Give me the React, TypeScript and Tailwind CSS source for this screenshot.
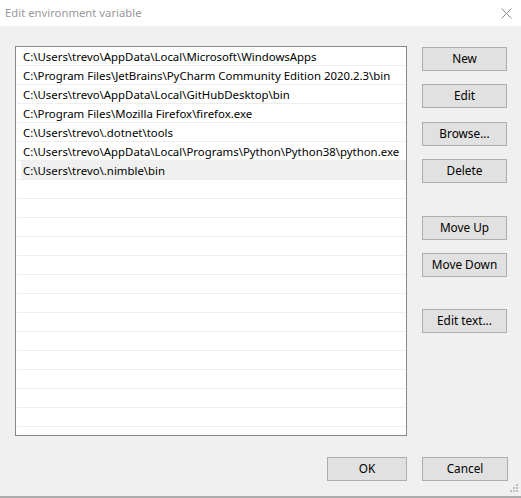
import React from "react";

const paths = [
  "C:\\Users\\trevo\\AppData\\Local\\Microsoft\\WindowsApps",
  "C:\\Program Files\\JetBrains\\PyCharm Community Edition 2020.2.3\\bin",
  "C:\\Users\\trevo\\AppData\\Local\\GitHubDesktop\\bin",
  "C:\\Program Files\\Mozilla Firefox\\firefox.exe",
  "C:\\Users\\trevo\\.dotnet\\tools",
  "C:\\Users\\trevo\\AppData\\Local\\Programs\\Python\\Python38\\python.exe",
  "C:\\Users\\trevo\\.nimble\\bin",
];

const TOTAL_ROWS = 21;
const SELECTED = 6;

function Button({ label, className = "" }: { label: string; className?: string }) {
  return (
    <button
      className={`h-[24px] border border-[#adadad] bg-[#e1e1e1] text-[11.8px] leading-none text-black ${className}`}
    >
      {label}
    </button>
  );
}

function PathList() {
  const rows = Array.from({ length: TOTAL_ROWS }, (_, i) => paths[i] ?? "");
  return (
    <div className="h-[390px] w-[392px] overflow-hidden border border-[#828790] bg-white">
      {rows.map((p, i) => (
        <div key={i} className="relative h-[19px]">
          {i === SELECTED && (
            <div className="absolute inset-y-0 left-[5px] right-0 bg-[#f0f0f0]" />
          )}
          <div className="relative pl-[7px] text-[11.4px] leading-[19px] whitespace-nowrap text-black">
            {p}
          </div>
          <div className="absolute bottom-0 left-[1px] right-0 h-px bg-[#efefef]" />
        </div>
      ))}
    </div>
  );
}

export default function App() {
  return (
    <div
      className="relative h-[498px] w-[521px] overflow-hidden bg-[#f0f0f0]"
      style={{ fontFamily: '"Noto Sans", "Open Sans", sans-serif' }}
    >
      {/* title bar */}
      <div className="flex h-[26px] items-center justify-between bg-white pl-[5px] pr-[9px]">
        <span className="text-[11.3px] text-[#999999]">Edit environment variable</span>
        <svg width="11" height="11" viewBox="0 0 11 11">
          <path d="M0.5 0.5 L10.5 10.5 M10.5 0.5 L0.5 10.5" stroke="#8a8a8a" strokeWidth="1" />
        </svg>
      </div>

      {/* list and side buttons */}
      <div className="flex pl-[15px] pt-[20px]">
        <PathList />
        <div className="ml-[15px] flex w-[85px] flex-col pt-[1px]">
          <Button label="New" />
          <Button label="Edit" className="mt-[13px]" />
          <Button label="Browse..." className="mt-[14px]" />
          <Button label="Delete" className="mt-[13px]" />
          <Button label="Move Up" className="mt-[33px]" />
          <Button label="Move Down" className="mt-[13px]" />
          <Button label="Edit text..." className="mt-[32px]" />
        </div>
      </div>

      {/* dialog buttons */}
      <div className="mt-[21px] flex justify-end pr-[13px]">
        <Button label="OK" className="w-[80px]" />
        <Button label="Cancel" className="ml-[15px] w-[86px]" />
      </div>

      {/* size grip */}
      <svg className="absolute bottom-[5px] right-[2px]" width="9" height="9" viewBox="0 0 9 9">
        <rect x="6" y="0" width="2" height="2" fill="#bcbcbc" />
        <rect x="3" y="3" width="2" height="2" fill="#bcbcbc" />
        <rect x="6" y="3" width="2" height="2" fill="#bcbcbc" />
        <rect x="0" y="6" width="2" height="2" fill="#bcbcbc" />
        <rect x="3" y="6" width="2" height="2" fill="#bcbcbc" />
        <rect x="6" y="6" width="2" height="2" fill="#bcbcbc" />
      </svg>

      {/* window bottom edge */}
      <div className="absolute bottom-0 left-0 right-0 h-[2px] bg-[#ababab]" />
    </div>
  );
}
